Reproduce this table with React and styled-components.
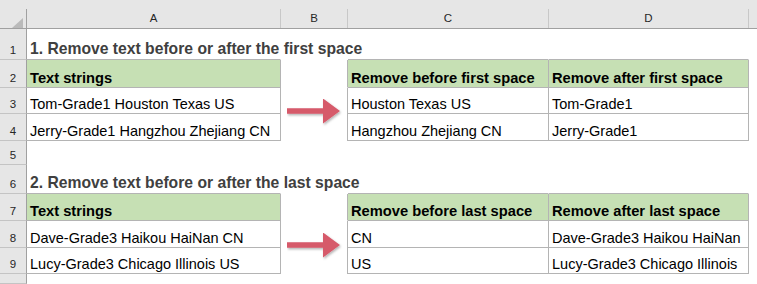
import React from "react";
import styled, { createGlobalStyle } from "styled-components";

const GlobalStyle = createGlobalStyle`
  *, *::before, *::after {
    box-sizing: border-box;
  }
  html, body {
    margin: 0;
    padding: 0;
    background: #fff;
    overflow: hidden;
  }
  body {
    font-family: "Liberation Sans", Arial, sans-serif;
  }
`;

const ROW_HEIGHTS = [29, 31, 28, 26, 27, 24, 29, 27, 27, 26];
const COLUMNS = ["A", "B", "C", "D", ""];

const GRID_LINE = "#b4b4b4";
const HEAD_LINE = "#a0a0a0";

const Sheet = styled.div`
  display: grid;
  grid-template-columns: 27px 254px 67px 201px 200px 1fr;
  grid-template-rows: ${ROW_HEIGHTS.map((h) => h + "px").join(" ")} 1fr;
  width: 100vw;
  height: 100vh;
  background: #fff;
`;

const HeadStrip = styled.div`
  display: flex;
  padding-top: 9px;
  background: #e6e6e6;
  border-bottom: 1px solid ${HEAD_LINE};
`;

const HeadLabel = styled.div`
  flex: 1;
  display: flex;
  align-items: flex-end;
  justify-content: ${(p) => (p.$corner ? "flex-end" : "center")};
  padding: ${(p) => (p.$corner ? "0 3px 0 0" : "0 0 4px")};
  border-right: 1px solid ${(p) => (p.$last ? "transparent" : p.$corner ? HEAD_LINE : "#c8c8c8")};
  font-size: 11.5px;
  color: #262626;
`;

const RowHead = styled.div`
  display: flex;
  align-items: flex-end;
  justify-content: center;
  padding-bottom: 3px;
  background: #e6e6e6;
  border-right: 1px solid ${HEAD_LINE};
  border-bottom: 1px solid #c4c4c4;
  font-size: 11.5px;
  color: #262626;
`;

const Cell = styled.div`
  display: flex;
  align-items: flex-end;
  min-width: 0;
  padding: 0 3px 1px;
  white-space: nowrap;
  background: ${(p) => (p.$fill ? "#c6e0b4" : "transparent")};
  border-right: 1px solid ${(p) => (p.$right ? GRID_LINE : "transparent")};
  border-bottom: 1px solid ${(p) => (p.$bottom ? GRID_LINE : "transparent")};
  font-size: ${(p) => (p.$bold ? "14.7px" : "14.5px")};
  font-weight: ${(p) => (p.$bold ? 700 : 400)};
  color: #000;
`;

const Title = styled(Cell)`
  font-size: 15.7px;
  font-weight: 700;
  color: #404040;
`;

const ArrowCell = styled.div`
  grid-row: span 2;
  display: flex;
  align-items: flex-start;
  padding: ${(p) => p.$top}px 0 0 6px;
  border-right: 1px solid ${GRID_LINE};
`;

const Corner = () => (
  <svg width="11" height="10" viewBox="0 0 11 10">
    <polygon points="11,0 11,10 0,10" fill="#bababa" />
  </svg>
);

const Arrow = () => {
  const id = React.useId().replace(/:/g, "");
  return (
    <svg width="58" height="30" viewBox="0 0 58 30">
      <defs>
        <filter id={id} x="-10%" y="-20%" width="130%" height="160%">
          <feDropShadow dx="1" dy="1.5" stdDeviation="1" floodColor="#000" floodOpacity="0.3" />
        </filter>
      </defs>
      <path
        d="M0 9.3 H36 V-0.5 L53 12 L36 24.5 V14.7 H0 Z"
        fill="#d65a6b"
        filter={`url(#${id})`}
      />
    </svg>
  );
};

const sections = [
  {
    first: 1,
    title: "1. Remove text before or after the first space",
    headers: ["Remove before first space", "Remove after first space"],
    arrowTop: 11,
    rows: [
      ["Tom-Grade1 Houston Texas US", "Houston Texas US", "Tom-Grade1"],
      ["Jerry-Grade1 Hangzhou Zhejiang CN", "Hangzhou Zhejiang CN", "Jerry-Grade1"]
    ]
  },
  {
    first: 6,
    title: "2. Remove text before or after the last space",
    headers: ["Remove before last space", "Remove after last space"],
    arrowTop: 12,
    rows: [
      ["Dave-Grade3 Haikou HaiNan CN", "CN", "Dave-Grade3 Haikou HaiNan"],
      ["Lucy-Grade3 Chicago Illinois US", "US", "Lucy-Grade3 Chicago Illinois"]
    ]
  }
];

const BlankRow = ({ n }) => (
  <>
    <RowHead>{n}</RowHead>
    <Cell />
    <Cell />
    <Cell />
    <Cell />
    <Cell />
  </>
);

const Section = ({ section }) => {
  const { first, title, headers, rows, arrowTop } = section;
  return (
    <>
      <RowHead>{first}</RowHead>
      <Title $bottom>{title}</Title>
      <Cell />
      <Cell $bottom />
      <Cell $bottom />
      <Cell />

      <RowHead>{first + 1}</RowHead>
      <Cell $fill $bold $right $bottom>
        Text strings
      </Cell>
      <Cell $right />
      <Cell $fill $bold $right $bottom>
        {headers[0]}
      </Cell>
      <Cell $fill $bold $right $bottom>
        {headers[1]}
      </Cell>
      <Cell />

      {rows.map(([source, before, after], i) => (
        <React.Fragment key={source}>
          <RowHead>{first + 2 + i}</RowHead>
          <Cell $right $bottom>
            {source}
          </Cell>
          {i === 0 && (
            <ArrowCell $top={arrowTop}>
              <Arrow />
            </ArrowCell>
          )}
          <Cell $right $bottom>
            {before}
          </Cell>
          <Cell $right $bottom>
            {after}
          </Cell>
          <Cell />
        </React.Fragment>
      ))}
    </>
  );
};

export default function App() {
  return (
    <>
      <GlobalStyle />
      <Sheet>
        <HeadStrip>
          <HeadLabel $corner>
            <Corner />
          </HeadLabel>
        </HeadStrip>
        {COLUMNS.map((c, i) => (
          <HeadStrip key={i}>
            <HeadLabel $last={i === COLUMNS.length - 1}>{c}</HeadLabel>
          </HeadStrip>
        ))}

        <Section section={sections[0]} />
        <BlankRow n={5} />
        <Section section={sections[1]} />
        <BlankRow />
      </Sheet>
    </>
  );
}
